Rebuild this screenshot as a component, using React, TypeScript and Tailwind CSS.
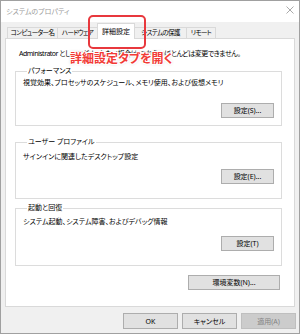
export default function App() {
  const font =
    "font-[family-name:'Noto_Sans','Noto_Sans_CJK_JP',sans-serif] [font-feature-settings:'palt']";
  const btn =
    "h-[15px] border border-[#adadad] bg-[#e1e1e1] flex items-center justify-center text-[7px] leading-none text-black";
  const tab =
    "h-[11px] border-t border-l border-[#d9d9d9] bg-[#f0f0f0] flex items-center justify-center text-[6.5px] tracking-[-0.6px] leading-none text-black whitespace-nowrap";
  const label = "h-[10px] leading-[10px] -mt-[6px] ml-[4px] px-[1px] bg-white w-fit text-[7px] text-black";
  const line = "h-[10px] leading-[10px] text-[7px] text-black whitespace-nowrap";

  return (
    <div className={`relative w-[300px] h-[334px] box-border overflow-hidden bg-[#f0f0f0] border border-[#a0a0a0] flex flex-col ${font}`}>
      {/* title bar */}
      <div className="h-[21px] bg-white flex items-center justify-between pl-[5px] pr-[5px]">
        <span className="text-[7px] leading-none text-[#9a9a9a]">システムのプロパティ</span>
        <svg width="8" height="8" viewBox="0 0 8 8" className="mt-[-3px]">
          <path d="M0.5 0.5 L7.5 7.5 M7.5 0.5 L0.5 7.5" stroke="#a0a0a0" strokeWidth="0.9" />
        </svg>
      </div>

      {/* tabs */}
      <div className="h-[16px] flex items-end pl-[6px]">
        <div className={`${tab} w-[50px]`}>コンピューター名</div>
        <div className={`${tab} w-[40px]`}>ハードウェア</div>
        <div className="relative z-10 -mb-px h-[16px] w-[38px] border-t border-l border-r border-[#d9d9d9] bg-white flex items-center justify-center text-[7px] leading-none text-black whitespace-nowrap">
          詳細設定
        </div>
        <div className={`${tab} w-[51px] border-l-0`}>システムの保護</div>
        <div className={`${tab} w-[30px] border-r`}>リモート</div>
      </div>

      {/* panel */}
      <div className="ml-[4px] mr-[4px] h-[269px] box-border bg-white border border-[#d9d9d9] flex flex-col pl-[9px] pr-[12px] pt-[10px]">
        <div className={`${line} ml-[4px] tracking-[-0.5px]`}>
          Administrator としてログオンしない場合は、これらのほとんどは変更できません。
        </div>

        {/* performance */}
        <div className="mt-[12px] border border-[#dcdcdc] flex flex-col pl-[7px] pr-[7px] pb-[7px]">
          <div className={`${label} -ml-[3px]`}>パフォーマンス</div>
          <div className={`${line} mt-[2px]`}>視覚効果、プロセッサのスケジュール、メモリ使用、および仮想メモリ</div>
          <div className="mt-[15px] flex justify-end">
            <div className={`${btn} w-[53px]`}>設定(S)...</div>
          </div>
        </div>

        {/* user profile */}
        <div className="mt-[16px] border border-[#dcdcdc] flex flex-col pl-[7px] pr-[7px] pb-[14px]">
          <div className={`${label} -ml-[3px]`}>ユーザー プロファイル</div>
          <div className={`${line} mt-[5px]`}>サインインに関連したデスクトップ設定</div>
          <div className="mt-[7px] flex justify-end">
            <div className={`${btn} w-[53px]`}>設定(E)...</div>
          </div>
        </div>

        {/* startup */}
        <div className="mt-[9px] border border-[#dcdcdc] flex flex-col pl-[7px] pr-[7px] pb-[14px]">
          <div className={`${label} -ml-[3px]`}>起動と回復</div>
          <div className={`${line} mt-[4px]`}>システム起動、システム障害、およびデバッグ情報</div>
          <div className="mt-[9px] flex justify-end">
            <div className={`${btn} w-[53px]`}>設定(T)</div>
          </div>
        </div>

        <div className="mt-[9px] flex justify-end pr-[2px]">
          <div className={`${btn} w-[92px] h-[14px]`}>環境変数(N)...</div>
        </div>
      </div>

      {/* bottom buttons */}
      <div className="mt-[6px] flex justify-end gap-[4px] pr-[3px]">
        <div className={`${btn} w-[55px] h-[16px]`}>OK</div>
        <div className={`${btn} w-[55px] h-[16px]`}>キャンセル</div>
        <div className="h-[16px] w-[55px] border border-[#bfbfbf] bg-[#cccccc] flex items-center justify-center text-[7px] leading-none text-[#838383]">
          適用(A)
        </div>
      </div>

      {/* annotation overlay */}
      <div className="absolute left-[87px] top-[14px] w-[58px] h-[34px] border-2 border-[#e8383d] rounded-[5px]" />
      <div className="absolute left-[69px] top-[50px] text-[12px] leading-[16px] font-bold text-[#f23b36] whitespace-nowrap [text-shadow:1px_0_0_#fff,-1px_0_0_#fff,0_1px_0_#fff,0_-1px_0_#fff,1px_1px_0_#fff,-1px_-1px_0_#fff,1px_-1px_0_#fff,-1px_1px_0_#fff,0_0_3px_rgba(0,0,0,0.35)]">
        詳細設定タブを開く
      </div>
    </div>
  );
}
